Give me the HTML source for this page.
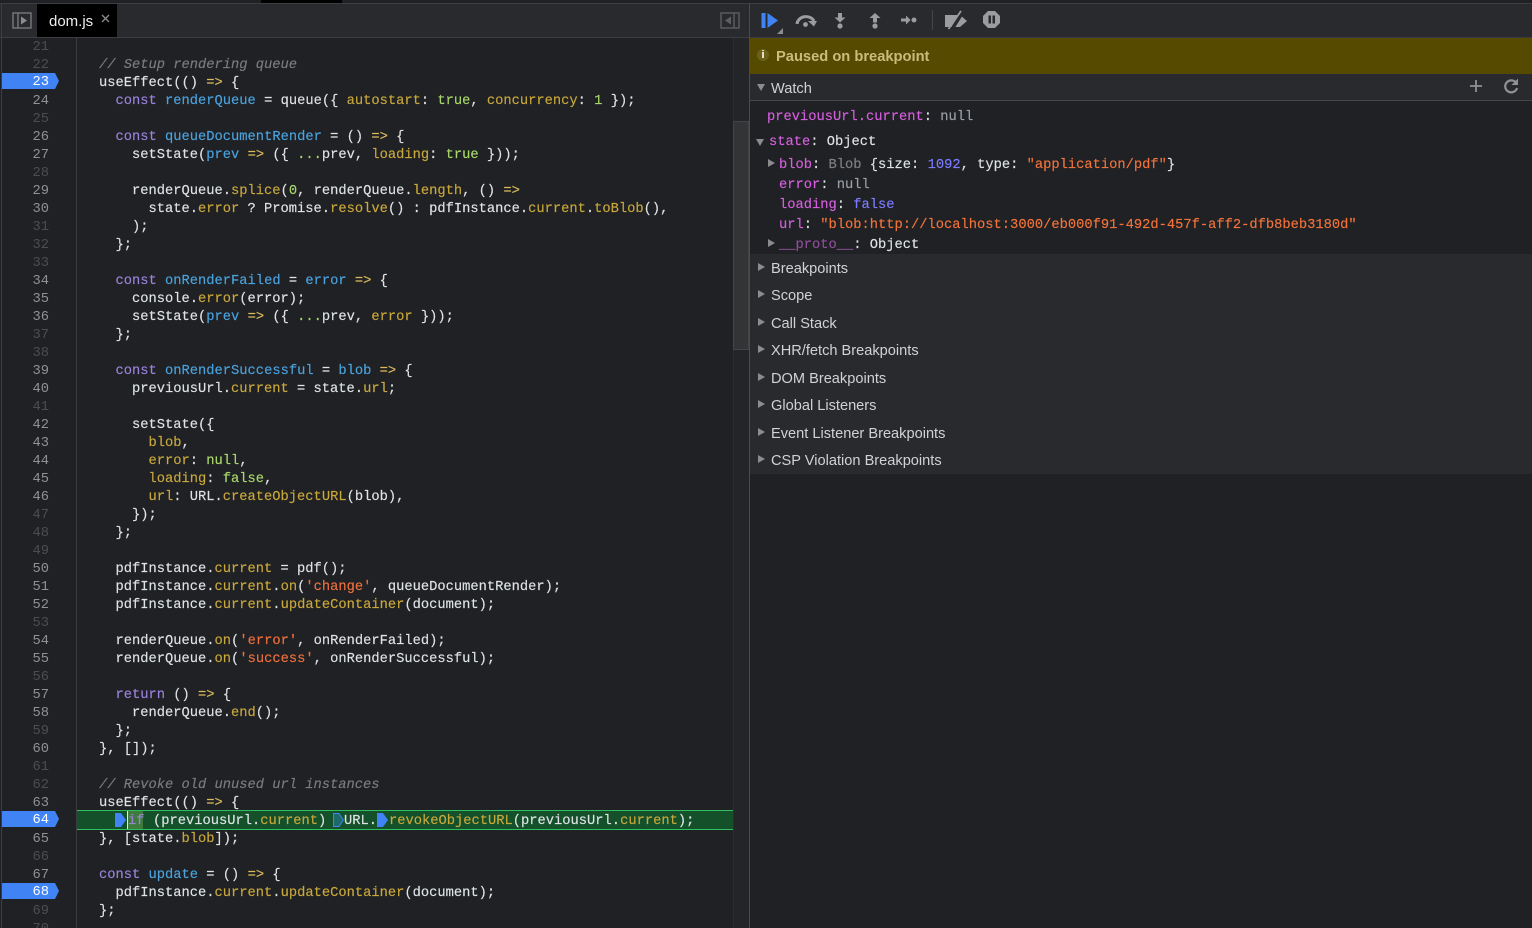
<!DOCTYPE html>
<html><head><meta charset="utf-8">
<style>
html,body{margin:0;padding:0;background:#202124;width:1532px;height:928px;overflow:hidden}
#r{position:absolute;left:0;top:0;width:1532px;height:928px;overflow:hidden;font-family:"Liberation Mono",monospace;font-size:13.75px;color:#dfe3e6}
.a{position:absolute}
.l{position:absolute;left:99px;height:18px;line-height:18px;white-space:pre;margin-top:2px;-webkit-text-stroke:.15px}
.n{position:absolute;left:4px;width:45px;text-align:right;height:18px;line-height:18px;color:#8f9194;margin-top:2px}
.d{color:#4b4d50}
.w{color:#fff}
.k{color:#9a82dc}.f{color:#4aa3df}.y{color:#c9a83c}.s{color:#f0703c}.c{color:#7c7c7c;font-style:italic}.g{color:#a8d86a}.o{color:#d9bb5c}
.bp{position:absolute;left:2px;width:57px;height:16px}
.w1{position:absolute;white-space:pre;height:20px;line-height:20px;margin-top:2px;-webkit-text-stroke:.15px}
.m{color:#d55fde}.nl{color:#9aa0a6}.b{color:#7c7cff}.st{color:#f2733a}.pr{color:#8f4f9a}
.sec{position:absolute;left:771px;font-family:"Liberation Sans",sans-serif;font-size:14.6px;color:#d0d2d4;height:20px;line-height:20px;white-space:pre;margin-top:1px}
.t{position:absolute;left:758px;width:0;height:0;border-left:7px solid #8a8c8f;border-top:4.5px solid transparent;border-bottom:4.5px solid transparent}
</style></head><body>
<div id="r">
<!-- top strip -->
<div class="a" style="left:0;top:0;width:1532px;height:3px;background:#202124"></div>
<div class="a" style="left:261px;top:0;width:81px;height:3px;background:#000"></div>
<div class="a" style="left:0;top:3px;width:1532px;height:1px;background:#3c3d40"></div>
<div class="a" style="left:0;top:4px;width:1532px;height:33px;background:#292a2d"></div>
<div class="a" style="left:0;top:37px;width:1532px;height:1px;background:#3c3d40"></div>
<div class="a" style="left:1px;top:3px;width:1px;height:925px;background:#3c3d40"></div>
<!-- tab -->
<div class="a" style="left:37px;top:4px;width:80px;height:33px;background:#000"></div>
<div class="a" style="left:49px;top:12px;font-family:'Liberation Sans',sans-serif;font-size:15px;line-height:20px;color:#eee">dom.js</div>
<svg class="a" style="left:100px;top:13px" width="11" height="11"><path d="M2 2L9 9M9 2L2 9" stroke="#8a8c8f" stroke-width="1.3"/></svg>
<svg class="a" style="left:12px;top:12px" width="20" height="17"><rect x="1" y="1" width="18" height="15" fill="none" stroke="#77797c" stroke-width="1.4"/><path d="M6 1V16" stroke="#77797c" stroke-width="1.4"/><path d="M9 4.5L15 8.5L9 12.5Z" fill="#8a8c8f"/></svg>
<svg class="a" style="left:720px;top:12px" width="20" height="17"><rect x="1" y="1" width="18" height="15" fill="none" stroke="#5c5e61" stroke-width="1.4"/><path d="M14 1V16" stroke="#5c5e61" stroke-width="1.4"/><path d="M11 4.5L5 8.5L11 12.5Z" fill="#5c5e61"/></svg>
<!-- gutter -->
<div class="a" style="left:76px;top:38px;width:1px;height:890px;background:#3c3d40"></div>
<div class="a" style="left:733px;top:38px;width:16px;height:890px;background:#242528;border-left:1px solid #2c2d30;box-sizing:border-box"></div>
<div class="a" style="left:733px;top:121px;width:16px;height:229px;background:#333435;border:1px solid #434447;box-sizing:border-box"></div>
<div class="a" style="left:749px;top:3px;width:1px;height:925px;background:#4a4b4e"></div>
<!-- breakpoints -->
<svg class="bp" style="top:73px" width="57" height="16"><path d="M0 0H53L57 8L53 16H0Z" fill="#3f83f5"/></svg>
<svg class="bp" style="top:811px" width="57" height="16"><path d="M0 0H53L57 8L53 16H0Z" fill="#3f83f5"/></svg>
<svg class="bp" style="top:883px" width="57" height="16"><path d="M0 0H53L57 8L53 16H0Z" fill="#3f83f5"/></svg>
<!-- line numbers -->
<div class="n d" style="top:37px">21</div><div class="n d" style="top:55px">22</div><div class="n w" style="top:72px">23</div><div class="n" style="top:91px">24</div><div class="n d" style="top:109px">25</div><div class="n" style="top:127px">26</div><div class="n" style="top:145px">27</div><div class="n d" style="top:163px">28</div><div class="n" style="top:181px">29</div><div class="n" style="top:199px">30</div><div class="n d" style="top:217px">31</div><div class="n d" style="top:235px">32</div><div class="n d" style="top:253px">33</div><div class="n" style="top:271px">34</div><div class="n" style="top:289px">35</div><div class="n" style="top:307px">36</div><div class="n d" style="top:325px">37</div><div class="n d" style="top:343px">38</div><div class="n" style="top:361px">39</div><div class="n" style="top:379px">40</div><div class="n d" style="top:397px">41</div><div class="n" style="top:415px">42</div><div class="n" style="top:433px">43</div><div class="n" style="top:451px">44</div><div class="n" style="top:469px">45</div><div class="n" style="top:487px">46</div><div class="n d" style="top:505px">47</div><div class="n d" style="top:523px">48</div><div class="n d" style="top:541px">49</div><div class="n" style="top:559px">50</div><div class="n" style="top:577px">51</div><div class="n" style="top:595px">52</div><div class="n d" style="top:613px">53</div><div class="n" style="top:631px">54</div><div class="n" style="top:649px">55</div><div class="n d" style="top:667px">56</div><div class="n" style="top:685px">57</div><div class="n" style="top:703px">58</div><div class="n d" style="top:721px">59</div><div class="n" style="top:739px">60</div><div class="n d" style="top:757px">61</div><div class="n d" style="top:775px">62</div><div class="n" style="top:793px">63</div><div class="n w" style="top:810px">64</div><div class="n" style="top:829px">65</div><div class="n d" style="top:847px">66</div><div class="n" style="top:865px">67</div><div class="n w" style="top:882px">68</div><div class="n d" style="top:901px">69</div><div class="n d" style="top:919px">70</div>
<!-- code -->
<div class="l c" style="top:55px">// Setup rendering queue</div>
<div class="l" style="top:73px">useEffect(() <span class="o">=&gt;</span> {</div>
<div class="l" style="top:91px">  <span class="k">const</span> <span class="f">renderQueue</span> = queue({ <span class="y">autostart</span>: <span class="g">true</span>, <span class="y">concurrency</span>: <span class="g">1</span> });</div>
<div class="l" style="top:127px">  <span class="k">const</span> <span class="f">queueDocumentRender</span> = () <span class="o">=&gt;</span> {</div>
<div class="l" style="top:145px">    setState(<span class="f">prev</span> <span class="o">=&gt;</span> ({ <span class="g">...</span>prev, <span class="y">loading</span>: <span class="g">true</span> }));</div>
<div class="l" style="top:181px">    renderQueue.<span class="y">splice</span>(<span class="g">0</span>, renderQueue.<span class="y">length</span>, () <span class="o">=&gt;</span></div>
<div class="l" style="top:199px">      state.<span class="y">error</span> ? Promise.<span class="y">resolve</span>() : pdfInstance.<span class="y">current</span>.<span class="y">toBlob</span>(),</div>
<div class="l" style="top:217px">    );</div>
<div class="l" style="top:235px">  };</div>
<div class="l" style="top:271px">  <span class="k">const</span> <span class="f">onRenderFailed</span> = <span class="f">error</span> <span class="o">=&gt;</span> {</div>
<div class="l" style="top:289px">    console.<span class="y">error</span>(error);</div>
<div class="l" style="top:307px">    setState(<span class="f">prev</span> <span class="o">=&gt;</span> ({ <span class="g">...</span>prev, <span class="y">error</span> }));</div>
<div class="l" style="top:325px">  };</div>
<div class="l" style="top:361px">  <span class="k">const</span> <span class="f">onRenderSuccessful</span> = <span class="f">blob</span> <span class="o">=&gt;</span> {</div>
<div class="l" style="top:379px">    previousUrl.<span class="y">current</span> = state.<span class="y">url</span>;</div>
<div class="l" style="top:415px">    setState({</div>
<div class="l" style="top:433px">      <span class="y">blob</span>,</div>
<div class="l" style="top:451px">      <span class="y">error</span>: <span class="g">null</span>,</div>
<div class="l" style="top:469px">      <span class="y">loading</span>: <span class="g">false</span>,</div>
<div class="l" style="top:487px">      <span class="y">url</span>: URL.<span class="y">createObjectURL</span>(blob),</div>
<div class="l" style="top:505px">    });</div>
<div class="l" style="top:523px">  };</div>
<div class="l" style="top:559px">  pdfInstance.<span class="y">current</span> = pdf();</div>
<div class="l" style="top:577px">  pdfInstance.<span class="y">current</span>.<span class="y">on</span>(<span class="s">'change'</span>, queueDocumentRender);</div>
<div class="l" style="top:595px">  pdfInstance.<span class="y">current</span>.<span class="y">updateContainer</span>(document);</div>
<div class="l" style="top:631px">  renderQueue.<span class="y">on</span>(<span class="s">'error'</span>, onRenderFailed);</div>
<div class="l" style="top:649px">  renderQueue.<span class="y">on</span>(<span class="s">'success'</span>, onRenderSuccessful);</div>
<div class="l" style="top:685px">  <span class="k">return</span> () <span class="o">=&gt;</span> {</div>
<div class="l" style="top:703px">    renderQueue.<span class="y">end</span>();</div>
<div class="l" style="top:721px">  };</div>
<div class="l" style="top:739px">}, []);</div>
<div class="l c" style="top:775px">// Revoke old unused url instances</div>
<div class="l" style="top:793px">useEffect(() <span class="o">=&gt;</span> {</div>
<!-- line 64 -->
<div class="a" style="left:77px;top:810px;width:656px;height:20px;box-sizing:border-box;background:#14502a;border-top:1px solid #2fbf60;border-bottom:1px solid #2fbf60"></div>
<div class="a" style="left:128px;top:811px;width:15px;height:18px;background:#3f7b3c"></div>
<div class="a" style="left:127px;top:811px;width:1px;height:18px;background:#e8e8e8"></div>
<svg class="a" style="left:115px;top:813px" width="11" height="14"><path d="M0 0H6L11 7L6 14H0Z" fill="#3f83f5"/></svg>
<svg class="a" style="left:333px;top:813px" width="11" height="14"><path d="M.5 .5H6L10.3 7L6 13.5H.5Z" fill="#1d6a6a" stroke="#3f83f5"/></svg>
<svg class="a" style="left:377px;top:813px" width="11" height="14"><path d="M0 0H6L11 7L6 14H0Z" fill="#3f83f5"/></svg>
<div class="l k" style="left:128px;top:811px">if</div>
<div class="l" style="left:153px;top:811px">(previousUrl.<span class="y">current</span>)</div>
<div class="l" style="left:344px;top:811px">URL.</div>
<div class="l" style="left:389px;top:811px"><span class="y">revokeObjectURL</span>(previousUrl.<span class="y">current</span>);</div>
<div class="l" style="top:829px">}, [state.<span class="y">blob</span>]);</div>
<div class="l" style="top:865px"><span class="k">const</span> <span class="f">update</span> = () <span class="o">=&gt;</span> {</div>
<div class="l" style="top:883px">  pdfInstance.<span class="y">current</span>.<span class="y">updateContainer</span>(document);</div>
<div class="l" style="top:901px">};</div>
<!-- debugger toolbar -->
<svg class="a" style="left:760px;top:11px" width="24" height="24"><rect x="1.5" y="2" width="4" height="15" fill="#3f83f5"/><path d="M7.5 2L18 9.500L7.500 17Z" fill="#3f83f5"/><path d="M23 17V23H17Z" fill="#8a8c8f"/></svg>
<svg class="a" style="left:794px;top:12px" width="24" height="16"><path d="M3 12A9 8 0 0 1 20 9" fill="none" stroke="#9a9c9f" stroke-width="3"/><path d="M14 9H23L20 14.500Z" fill="#9a9c9f"/><circle cx="11.500" cy="12.500" r="2.400" fill="#9a9c9f"/></svg>
<svg class="a" style="left:833px;top:11px" width="14" height="18"><path d="M5 2H9V6.500H12.500L7 11.500L1.500 6.500H5Z" fill="#9a9c9f"/><circle cx="7" cy="15" r="2.600" fill="#9a9c9f"/></svg>
<svg class="a" style="left:868px;top:11px" width="14" height="18"><path d="M7 2L12.500 7H9V11.500H5V7H1.500Z" fill="#9a9c9f"/><circle cx="7" cy="15" r="2.600" fill="#9a9c9f"/></svg>
<svg class="a" style="left:900px;top:12px" width="18" height="16"><path d="M1 6.500H6V3.500L10.500 8L6 12.500V9.500H1Z" fill="#9a9c9f"/><circle cx="14" cy="8" r="2.500" fill="#9a9c9f"/></svg>
<div class="a" style="left:932px;top:10px;width:1px;height:20px;background:#44464a"></div>
<svg class="a" style="left:944px;top:9px" width="24" height="22"><path d="M1 6H16L23 12L16 18H1Z" fill="#9a9c9f"/><path d="M7.500 21L20 1" stroke="#292a2d" stroke-width="3.400"/><path d="M4.500 20L17 2" stroke="#9a9c9f" stroke-width="1.800"/></svg>
<svg class="a" style="left:982px;top:10px" width="20" height="20"><path d="M6 1H13L18 6V13L13 18H6L1 13V6Z" fill="#9a9c9f"/><rect x="6.500" y="5.500" width="2.500" height="8" fill="#292a2d"/><rect x="10.500" y="5.500" width="2.500" height="8" fill="#292a2d"/></svg>
<!-- banner -->
<div class="a" style="left:750px;top:38px;width:782px;height:36px;background:#564900"></div>
<div class="a" style="left:757px;top:49px;width:12px;height:12px;border-radius:50%;background:#6d6118"></div>
<div class="a" style="left:757px;top:49px;width:12px;text-align:center;font:bold 11px/12px 'Liberation Sans',sans-serif;color:#fff">i</div>
<div class="a" style="left:776px;top:47px;font-family:'Liberation Sans',sans-serif;font-weight:bold;font-size:14.700px;line-height:20px;color:#c9bc7f;white-space:pre">Paused on breakpoint</div>
<!-- watch -->
<div class="a" style="left:750px;top:74px;width:782px;height:26px;background:#292a2d"></div>
<div class="a" style="left:750px;top:100px;width:782px;height:1px;background:#44464a"></div>
<div class="a" style="left:757px;top:84px;width:0;height:0;border-top:7px solid #8a8c8f;border-left:4.500px solid transparent;border-right:4.500px solid transparent"></div>
<div class="sec" style="top:78px">Watch</div>
<svg class="a" style="left:1469px;top:79px" width="14" height="14"><path d="M7 1V13M1 7H13" stroke="#8f9194" stroke-width="1.800"/></svg>
<svg class="a" style="left:1502px;top:77px" width="18" height="18"><path d="M14.500 6.500A6 6 0 1 0 15 11" fill="none" stroke="#8f9194" stroke-width="2.200"/><path d="M16 1.500V8H9.500Z" fill="#8f9194"/></svg>
<div class="w1" style="left:767px;top:106px"><span class="m">previousUrl.current</span>: <span class="nl">null</span></div>
<div class="a" style="left:756px;top:139px;width:0;height:0;border-top:7px solid #8a8c8f;border-left:4.500px solid transparent;border-right:4.500px solid transparent"></div>
<div class="w1" style="left:769px;top:131px"><span class="m">state</span>: Object</div>
<div class="a" style="left:768px;top:159px;width:0;height:0;border-left:7px solid #8a8c8f;border-top:4.500px solid transparent;border-bottom:4.500px solid transparent"></div>
<div class="w1" style="left:779px;top:154px"><span class="m">blob</span>: <span style="color:#7f8184">Blob</span> {size: <span class="b">1092</span>, type: <span class="st">"application/pdf"</span>}</div>
<div class="w1" style="left:779px;top:174px"><span class="m">error</span>: <span class="nl">null</span></div>
<div class="w1" style="left:779px;top:194px"><span class="m">loading</span>: <span class="b">false</span></div>
<div class="w1" style="left:779px;top:214px"><span class="m">url</span>: <span class="st">"blob:http://localhost:3000/eb000f91-492d-457f-aff2-dfb8beb3180d"</span></div>
<div class="a" style="left:768px;top:239px;width:0;height:0;border-left:7px solid #8a8c8f;border-top:4.500px solid transparent;border-bottom:4.500px solid transparent"></div>
<div class="w1" style="left:779px;top:234px"><span class="pr">__proto__</span>: Object</div>
<!-- sections -->
<div class="a" style="left:750px;top:254px;width:782px;height:220px;background:#292a2d"></div>
<div class="t" style="top:263px"></div><div class="sec" style="top:258px">Breakpoints</div>
<div class="t" style="top:290px"></div><div class="sec" style="top:285px">Scope</div>
<div class="t" style="top:318px"></div><div class="sec" style="top:313px">Call Stack</div>
<div class="t" style="top:345px"></div><div class="sec" style="top:340px">XHR/fetch Breakpoints</div>
<div class="t" style="top:373px"></div><div class="sec" style="top:368px">DOM Breakpoints</div>
<div class="t" style="top:400px"></div><div class="sec" style="top:395px">Global Listeners</div>
<div class="t" style="top:428px"></div><div class="sec" style="top:423px">Event Listener Breakpoints</div>
<div class="t" style="top:455px"></div><div class="sec" style="top:450px">CSP Violation Breakpoints</div>
</div>
</body></html>
